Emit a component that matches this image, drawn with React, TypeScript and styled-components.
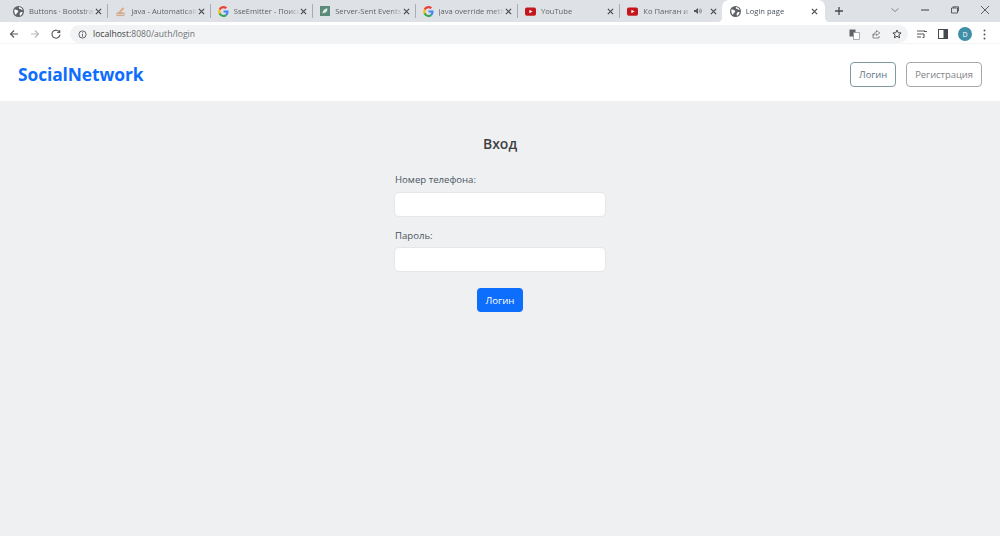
import React from 'react';
import styled, { createGlobalStyle } from 'styled-components';

const GlobalStyle = createGlobalStyle`
  html, body {
    margin: 0;
    padding: 0;
    background: #eff0f2;
    font-family: 'Open Sans', 'Noto Sans', 'Liberation Sans', sans-serif;
  }
  * { box-sizing: border-box; }
`;

const Page = styled.div`
  display: flex;
  flex-direction: column;
  width: 1000px;
  height: 536px;
  overflow: hidden;
`;

const TabStrip = styled.div`
  display: flex;
  align-items: stretch;
  flex: 0 0 22px;
  padding-left: 4px;
  background: #dee1e6;
`;

const Tab = styled.div<{ $sep?: boolean }>`
  position: relative;
  display: flex;
  align-items: center;
  flex: 0 0 102.4px;
  min-width: 0;
  padding: 0 4px 0 9px;
  color: #5f6266;
  ${(p) =>
    p.$sep
      ? `&::after {
    content: '';
    position: absolute;
    right: -2px;
    top: 4px;
    height: 14px;
    width: 1px;
    background: #a9acb0;
  }`
      : ''}
`;

const ActiveTab = styled(Tab)`
  flex: 0 0 103px;
  margin-left: 1px;
  padding: 0 7px 0 8px;
  background: #fff;
  border-radius: 7px 7px 0 0;
  color: #48525c;

  &::before,
  &::after {
    content: '';
    position: absolute;
    bottom: 0;
    width: 5px;
    height: 5px;
  }

  &::before {
    left: -5px;
    background: radial-gradient(circle at 0 0, transparent 5px, #fff 5.5px);
  }

  &::after {
    right: -5px;
    background: radial-gradient(circle at 100% 0, transparent 5px, #fff 5.5px);
  }
`;

const TabTitle = styled.span`
  flex: 1;
  min-width: 0;
  margin-left: 5px;
  overflow: hidden;
  white-space: nowrap;
  font-size: 7.6px;
  -webkit-mask-image: linear-gradient(90deg, #000 82%, transparent);
  mask-image: linear-gradient(90deg, #000 82%, transparent);
`;

const NewTab = styled.div`
  display: flex;
  align-items: center;
  justify-content: center;
  width: 26px;
  margin-left: 1px;
`;

const WindowControls = styled.div`
  display: flex;
  align-items: center;
  margin-left: auto;
  margin-bottom: 3px;
`;

const WindowBtn = styled.div`
  display: flex;
  align-items: center;
  justify-content: center;
  width: 30px;
  height: 19px;
`;

const ToolBar = styled.div`
  display: flex;
  align-items: center;
  flex: 0 0 21px;
  padding: 3px 0 0 9px;
  background: #fff;
`;

const NavIcons = styled.div`
  display: flex;
  align-items: center;
  gap: 11px;
  margin-right: 9px;
`;

const Omnibox = styled.div`
  display: flex;
  align-items: center;
  width: 838px;
  height: 18px;
  padding: 0 6px 0 8px;
  background: #f1f3f4;
  border-radius: 9px;
`;

const Url = styled.span`
  margin-left: 6px;
  font-size: 8.6px;
  color: #3a3d41;

  span {
    color: #6e7175;
  }
`;

const OmniIcons = styled.div`
  display: flex;
  align-items: center;
  gap: 11px;
  margin-left: auto;
`;

const ToolIcons = styled.div`
  display: flex;
  align-items: center;
  gap: 11px;
  margin-left: 9px;
`;

const Avatar = styled.div`
  display: flex;
  align-items: center;
  justify-content: center;
  width: 14px;
  height: 14px;
  margin-left: -1px;
  border-radius: 50%;
  background: #3f8fa8;
  color: #fff;
  font-size: 7px;
`;

const Header = styled.header`
  display: flex;
  align-items: center;
  justify-content: space-between;
  flex: 0 0 58px;
  padding: 3px 18px 0;
  background: #fff;
  border-top: 1px solid #f3f4f5;
`;

const Brand = styled.div`
  color: #0d6efd;
  font-size: 17.4px;
  font-weight: 700;
  letter-spacing: -0.1px;
`;

const HeaderActions = styled.div`
  display: flex;
  gap: 10px;
`;

const OutlineBtn = styled.button<{ $tone: 'teal' | 'gray' }>`
  height: 25px;
  padding: 0 8px;
  background: #fff;
  border: 1px solid ${(p) => (p.$tone === 'teal' ? '#7f9aa0' : '#a5a9aa')};
  border-radius: 4px;
  color: ${(p) => (p.$tone === 'teal' ? '#5b7480' : '#7d8286')};
  font-family: inherit;
  font-size: 9.4px;
`;

const Main = styled.main`
  display: flex;
  flex: 1;
  flex-direction: column;
  align-items: center;
  padding-top: 33px;
  background: #eff0f2;
`;

const Title = styled.h1`
  margin: 0 0 18px;
  color: #3f3f42;
  font-size: 14px;
  font-weight: 600;
  line-height: 20px;
`;

const Form = styled.form`
  display: flex;
  flex-direction: column;
  width: 212px;
`;

const Label = styled.label<{ $nudge?: boolean }>`
  margin: ${(p) => (p.$nudge ? '1px 0 4px 1px' : '0 0 5px 1px')};
  color: #4b555e;
  font-size: 9.6px;
  line-height: 15px;
`;

const Field = styled.input`
  height: 25px;
  margin-bottom: 10px;
  background: #fff;
  border: 1px solid #e4e6e9;
  border-radius: 5px;
  outline: none;
`;

const Submit = styled.button`
  align-self: center;
  width: 46px;
  height: 24px;
  margin-top: 6px;
  background: #0d6efd;
  border: none;
  border-radius: 4px;
  color: #fff;
  font-family: inherit;
  font-size: 9.6px;
`;

const Globe = () => (
  <svg width="11" height="11" viewBox="0 0 24 24" style={{ flex: 'none' }}>
    <circle cx="12" cy="12" r="12" fill="#5f6368" />
    <path
      d="M3 8c3-1 4 1 6 1s3 2 2 4-3 1-3 3-1 3-2 3C4 17 2 12 3 8zM14 2c3 1 6 3 7 6-2 1-3 0-4-1s-3 0-4-2 0-2 1-3zM16 14c2-1 4-1 5 0-1 3-3 6-5 7-2-1-2-5 0-7z"
      fill="#fff"
    />
  </svg>
);

const JavaFav = () => (
  <svg width="11" height="12" viewBox="0 0 24 24" style={{ flex: 'none' }}>
    <path d="M4 16h16v6H4z" fill="none" stroke="#c9a58a" strokeWidth="2" />
    <path d="M7 15l10-11 3 3-9 9z" fill="#e4a37a" />
    <path d="M7 18h10" stroke="#d98a4e" strokeWidth="2" />
  </svg>
);

const GoogleFav = () => (
  <svg width="11" height="11" viewBox="0 0 24 24" style={{ flex: 'none' }}>
    <path d="M23 12.3c0-.8-.1-1.600-.2-2.300H12v4.400h6.200c-.3 1.400-1.100 2.600-2.300 3.400v2.900h3.700c2.200-2 3.400-5 3.400-8.400z" fill="#4285f4" />
    <path d="M12 24c3.100 0 5.700-1 7.600-2.800l-3.700-2.900c-1 .7-2.300 1.100-3.900 1.100-3 0-5.500-2-6.400-4.700H1.800v3C3.800 21.500 7.600 24 12 24z" fill="#34a853" />
    <path d="M5.600 14.700c-.5-1.400-.5-3 0-4.400v-3H1.800c-1.600 3.200-1.600 7.200 0 10.400z" fill="#fbbc05" />
    <path d="M12 4.700c1.700 0 3.200.6 4.400 1.700l3.300-3.300C17.700 1.200 15.100 0 12 0 7.600 0 3.800 2.500 1.800 6.200l3.800 3c.9-2.700 3.400-4.500 6.400-4.500z" fill="#ea4335" />
  </svg>
);

const LeafFav = () => (
  <svg width="10" height="10" viewBox="0 0 24 24" style={{ flex: 'none' }}>
    <rect width="24" height="24" fill="#5a8a78" />
    <path d="M6 18c0-7 5-12 12-12 0 7-4 11-9 11z" fill="#dfe9e4" />
  </svg>
);

const YouTubeFav = () => (
  <svg width="11" height="9" viewBox="0 0 24 18" style={{ flex: 'none' }}>
    <rect width="24" height="18" rx="4" fill="#c4161c" />
    <path d="M9.500 5v8l7-4z" fill="#fff" />
  </svg>
);

const Close = () => (
  <svg width="7" height="7" viewBox="0 0 8 8" style={{ flex: 'none' }}>
    <path d="M1 1l6 6M7 1L1 7" stroke="#45484c" strokeWidth="1.300" />
  </svg>
);

const Speaker = () => (
  <svg width="8" height="8" viewBox="0 0 8 8" style={{ flex: 'none', margin: '0 8px 0 3px' }}>
    <path d="M0 3h1.500L4 1v6L1.500 5H0z" fill="#55585c" />
    <path d="M5 2.500c1 .8 1 2.200 0 3M6.200 1.500c1.500 1.400 1.500 3.600 0 5" fill="none" stroke="#55585c" strokeWidth=".7" />
  </svg>
);

const Stroke: React.FC<{ w?: number; h?: number; box?: string; d: string; c?: string; sw?: number }> = ({
  w = 10,
  h = 10,
  box = '0 0 10 10',
  d,
  c = '#5f6368',
  sw = 1.1,
}) => (
  <svg width={w} height={h} viewBox={box} style={{ flex: 'none', display: 'block' }}>
    <path d={d} fill="none" stroke={c} strokeWidth={sw} />
  </svg>
);

interface TabData {
  title: string;
  icon: React.ReactNode;
  sep?: boolean;
  audio?: boolean;
}

const tabs: TabData[] = [
  { title: 'Buttons · Bootstrap v5.0', icon: <Globe />, sep: true },
  { title: 'java - Automatically', icon: <JavaFav />, sep: true },
  { title: 'SseEmitter - Поиск', icon: <GoogleFav />, sep: true },
  { title: 'Server-Sent Events', icon: <LeafFav />, sep: true },
  { title: 'java override method', icon: <GoogleFav />, sep: true },
  { title: 'YouTube', icon: <YouTubeFav />, sep: true },
  { title: 'Ко Панган и', icon: <YouTubeFav />, audio: true },
];

const App: React.FC = () => (
  <Page>
    <GlobalStyle />
    <TabStrip>
      {tabs.map((tab) => (
        <Tab key={tab.title} $sep={tab.sep}>
          {tab.icon}
          <TabTitle>{tab.title}</TabTitle>
          {tab.audio && <Speaker />}
          <Close />
        </Tab>
      ))}
      <ActiveTab>
        <Globe />
        <TabTitle>Login page</TabTitle>
        <Close />
      </ActiveTab>
      <NewTab>
        <Stroke d="M5 1v8M1 5h8" c="#45484c" sw={1.3} />
      </NewTab>
      <WindowControls>
        <WindowBtn>
          <Stroke d="M1.500 3.500L5 6.500l3.500-3" c="#6a6d71" sw={0.8} />
        </WindowBtn>
        <WindowBtn>
          <Stroke d="M1 5h8" c="#3c4043" sw={1} />
        </WindowBtn>
        <WindowBtn>
          <Stroke d="M1.500 3h6v5h-6zM3 3V1.800h5.500V6H7.500" c="#3c4043" sw={0.8} />
        </WindowBtn>
        <WindowBtn>
          <Stroke d="M1 1l8 8M9 1L1 9" c="#3c4043" sw={0.8} />
        </WindowBtn>
      </WindowControls>
    </TabStrip>
    <ToolBar>
      <NavIcons>
        <Stroke d="M9 5H1.500M5 1.500L1.500 5 5 8.500" c="#55585c" />
        <Stroke d="M1 5h7.500M5 1.500L8.500 5 5 8.500" c="#b4b7ba" />
        <Stroke d="M8.500 3.200A4 4 0 1 0 9 5.500M8.700 1v2.500H6.200" c="#55585c" />
      </NavIcons>
      <Omnibox>
        <svg width="9" height="9" viewBox="0 0 10 10" style={{ flex: 'none' }}>
          <circle cx="5" cy="5" r="4" fill="none" stroke="#55585c" strokeWidth="1" />
          <path d="M5 4.500v3M5 2.500v1" stroke="#55585c" strokeWidth="1" />
        </svg>
        <Url>
          localhost:<span>8080/auth/login</span>
        </Url>
        <OmniIcons>
          <svg width="11" height="11" viewBox="0 0 11 11" style={{ flex: 'none' }}>
            <rect x="0.500" y="0.500" width="6" height="7" fill="#5f6368" />
            <rect x="4.500" y="3.500" width="6" height="7" fill="#fff" stroke="#8a8d91" strokeWidth=".7" />
          </svg>
          <Stroke d="M2 5v4h6V7M5.500 1.500L8.800 4 5.500 6.500V5C4 5 3 5.600 2.200 6.500 2.500 4.500 3.800 3.200 5.500 3z" c="#6e7175" sw={0.8} />
          <Stroke d="M5 1l1.200 2.700 2.900.3-2.200 1.900.7 2.900L5 7.300 2.400 8.800l.7-2.900L.9 4l2.900-.3z" c="#45484c" sw={1} />
        </OmniIcons>
      </Omnibox>
      <ToolIcons>
        <Stroke d="M0 2h8M0 5h7M0 8h4M7 5v3.500M7 8.500h-1.500M7 2.500h3" c="#55585c" />
        <svg width="10" height="10" viewBox="0 0 10 10" style={{ flex: 'none' }}>
          <rect x="0.500" y="0.500" width="9" height="9" fill="none" stroke="#45484c" />
          <rect x="5.500" y="1" width="4" height="8" fill="#45484c" />
        </svg>
        <Avatar>D</Avatar>
        <svg width="3" height="11" viewBox="0 0 3 11" style={{ flex: 'none' }}>
          <circle cx="1.500" cy="1.500" r="1" fill="#55585c" />
          <circle cx="1.500" cy="5.500" r="1" fill="#55585c" />
          <circle cx="1.500" cy="9.500" r="1" fill="#55585c" />
        </svg>
      </ToolIcons>
    </ToolBar>
    <Header>
      <Brand>SocialNetwork</Brand>
      <HeaderActions>
        <OutlineBtn $tone="teal">Логин</OutlineBtn>
        <OutlineBtn $tone="gray">Регистрация</OutlineBtn>
      </HeaderActions>
    </Header>
    <Main>
      <Title>Вход</Title>
      <Form onSubmit={(e) => e.preventDefault()}>
        <Label htmlFor="phone">Номер телефона:</Label>
        <Field id="phone" type="text" />
        <Label htmlFor="password" $nudge>
          Пароль:
        </Label>
        <Field id="password" type="password" />
        <Submit type="submit">Логин</Submit>
      </Form>
    </Main>
  </Page>
);

export default App;
